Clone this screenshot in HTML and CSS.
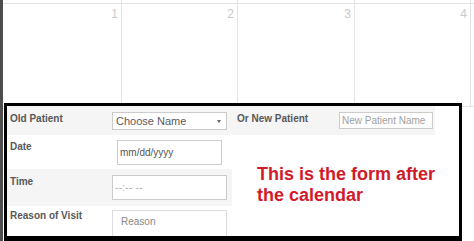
FILE: index.html
```html
<!DOCTYPE html>
<html>
<head>
<meta charset="utf-8">
<link rel="stylesheet" href="styles.css">
</head>
<body>
<div class="page">
  <div class="rail"></div>
  <div class="main">
    <div class="cal">
      <div class="cal-row prev">
        <div class="cell"></div><div class="cell"></div><div class="cell"></div><div class="cell"></div>
      </div>
      <div class="cal-row week">
        <div class="cell"><span class="day">1</span></div>
        <div class="cell"><span class="day">2</span></div>
        <div class="cell"><span class="day">3</span></div>
        <div class="cell"><span class="day">4</span></div>
      </div>
    </div>
    <div class="formbox">
      <div class="row striped r1">
        <div class="lbl">Old Patient</div>
        <div class="fld f-select">
          <div class="select"><span>Choose Name</span><span class="caret"></span></div>
        </div>
        <div class="lbl lbl2">Or New Patient</div>
        <div class="fld f-new"><input class="inp inp-new" type="text" placeholder="New Patient Name"></div>
      </div>
      <div class="row r2">
        <div class="lbl">Date</div>
        <div class="fld f-date"><input class="inp inp-date" type="text" placeholder="mm/dd/yyyy"></div>
      </div>
      <div class="row striped r3">
        <div class="lbl">Time</div>
        <div class="fld f-time"><input class="inp inp-time" type="text" placeholder="--:-- --"></div>
      </div>
      <div class="row r4">
        <div class="lbl">Reason of Visit</div>
        <div class="fld f-reason"><textarea class="reason" placeholder="Reason"></textarea></div>
      </div>
      <p class="note">This is the form after<br>the calendar</p>
    </div>
  </div>
</div>
</body>
</html>
```
FILE: styles.css
```css
html, body {
  margin: 0;
  padding: 0;
  background: #fff;
}
body {
  font-family: "Liberation Sans", Arial, sans-serif;
  overflow: hidden;
}
.page {
  display: flex;
  height: 241px;
}
.rail {
  flex: none;
  width: 3px;
  background: #4d4d4d;
}
.main {
  flex: 1;
  min-width: 0;
}
.cal-row {
  display: grid;
  grid-template-columns: 119px 116px 117px 116px;
}
.cal-row .cell {
  box-sizing: border-box;
  border-right: 1px solid #e4e4e4;
}
.prev {
  height: 3px;
}
.week {
  height: 102px;
  border-top: 1px solid #e4e4e4;
  border-bottom: 1px solid #e4e4e4;
}
.day {
  display: block;
  text-align: right;
  padding: 3px 3px 0 0;
  font-size: 12px;
  line-height: 14px;
  color: #c9c9c9;
}
.formbox {
  position: relative;
  box-sizing: border-box;
  margin-left: 1px;
  margin-top: -4px;
  width: 458px;
  height: 138px;
  border: 3px solid #000;
  border-bottom-width: 5px;
  overflow: hidden;
  background: #fff;
}
.row {
  display: flex;
  align-items: flex-start;
  width: fit-content;
}
.striped {
  background: #f5f5f5;
}
.r1 { padding: 6px 0 5px; }
.r2 { padding: 5px 0 4px; }
.r3 { padding: 6px 0 6px; }
.r4 { padding: 3px 0 0; }
.lbl {
  width: 102px;
  padding-left: 3px;
  font-size: 10px;
  line-height: 14px;
  font-weight: bold;
  color: #585858;
}
.lbl2 {
  width: 97px;
  padding-left: 5px;
}
.f-select { padding-right: 5px; }
.f-new { padding: 0 2px 0 5px; }
.f-date { padding: 0 10px 0 5px; }
.f-time { padding-right: 5px; }
.f-reason { padding: 1px 5px 0 0; }
.select {
  box-sizing: border-box;
  width: 115px;
  height: 18px;
  border: 1px solid #ccc;
  background: #fff;
  display: flex;
  align-items: center;
  justify-content: space-between;
  padding: 0 5px 0 3px;
  font-size: 11px;
  color: #5a5a5a;
}
.caret {
  width: 0;
  height: 0;
  border-left: 2px solid transparent;
  border-right: 2px solid transparent;
  border-top: 3px solid #666;
}
.inp {
  box-sizing: border-box;
  margin: 0;
  border: 1px solid #ccc;
  border-radius: 0;
  background: #fff;
  font-family: "Liberation Sans", Arial, sans-serif;
  font-size: 10px;
  padding: 0 2px;
  outline: none;
  display: block;
}
.inp-new {
  width: 94px;
  height: 17px;
}
.inp-new::placeholder { color: #a0a0a0; }
.inp-date {
  width: 105px;
  height: 25px;
}
.inp-date::placeholder { color: #555; }
.inp-time {
  width: 115px;
  height: 25px;
  letter-spacing: 0.3px;
}
.inp-time::placeholder { color: #b0b0b0; }
.reason {
  display: block;
  box-sizing: border-box;
  margin: 0;
  width: 115px;
  height: 40px;
  border: 1px solid #ddd;
  border-radius: 0;
  padding: 5px 8px;
  font-family: "Liberation Sans", Arial, sans-serif;
  font-size: 10px;
  line-height: 12px;
  resize: none;
  outline: none;
}
.reason::placeholder { color: #888; }
.note {
  position: absolute;
  left: 250px;
  top: 58px;
  margin: 0;
  font-size: 18px;
  line-height: 21px;
  font-weight: bold;
  color: #d11a2a;
}
```
